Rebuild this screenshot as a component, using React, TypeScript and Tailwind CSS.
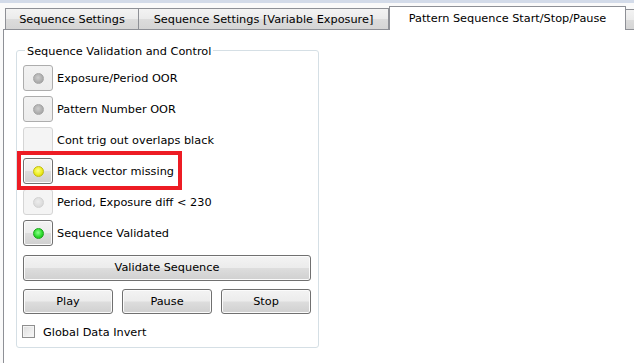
import React from "react";

const font = { fontFamily: '"DejaVu Sans", Verdana, sans-serif' };

function Led({ color }: { color: "gray" | "yellow" | "green" | "light" | "none" }) {
  if (color === "none") return null;
  const cls =
    color === "gray"
      ? "bg-[radial-gradient(circle_at_45%_40%,#cdcdcd_0%,#b0b0b0_55%,#999999_100%)] border border-[#a5a5a5]"
      : color === "yellow"
      ? "bg-[radial-gradient(circle_at_45%_40%,#fbff8a_0%,#eeee22_55%,#c9c400_100%)] border border-[#c2bc10]"
      : color === "green"
      ? "bg-[radial-gradient(circle_at_45%_40%,#8dff8d_0%,#2edc2e_55%,#14ad14_100%)] border border-[#1aa51a]"
      : "bg-[radial-gradient(circle_at_45%_40%,#ececec_0%,#dddddd_60%,#cfcfcf_100%)] border border-[#d2d2d2]";
  return <div className={`w-[11px] h-[11px] rounded-full ${cls}`} />;
}

type Kind = "dim" | "enabled" | "flat";

function LedButton({ kind, led }: { kind: Kind; led: "gray" | "yellow" | "green" | "light" | "none" }) {
  const cls =
    kind === "enabled"
      ? "border-[#707070] bg-[linear-gradient(to_bottom,#f3f3f3_0%,#ececec_48%,#dddddd_52%,#d0d0d0_100%)] shadow-[inset_0_0_0_1px_#fbfbfb]"
      : kind === "dim"
      ? "border-[#adadad] bg-[linear-gradient(to_bottom,#f2f2f2_0%,#ececec_100%)]"
      : "border-[#d5d5d5] bg-[#f4f4f4]";
  return (
    <div className={`w-[30px] h-[26px] shrink-0 rounded-[3px] border flex items-center justify-center ${cls}`}>
      <Led color={led} />
    </div>
  );
}

function Row({ kind, led, label }: { kind: Kind; led: "gray" | "yellow" | "green" | "light" | "none"; label: string }) {
  return (
    <div className="flex items-center gap-[4px] h-[26px]">
      <LedButton kind={kind} led={led} />
      <span className="pt-[2px] text-[11.3px] leading-none text-black">{label}</span>
    </div>
  );
}

function PushButton({ label, h }: { label: string; h: string }) {
  return (
    <div
      className={`${h} rounded-[3px] border border-[#707070] bg-[linear-gradient(to_bottom,#f3f3f3_0%,#ececec_48%,#dddddd_52%,#d0d0d0_100%)] shadow-[inset_0_0_0_1px_#fbfbfb] flex items-center justify-center text-[11.3px] leading-none text-black`}
    >
      {label}
    </div>
  );
}

export default function App() {
  return (
    <div className="relative w-[634px] h-[363px] overflow-hidden bg-[#fafafa] flex flex-col" style={font}>
      <div className="h-[3px] shrink-0 bg-[#d3dbe9]" />
      <div className="flex-1 flex flex-col pl-[3px]">
        {/* tabs */}
        <div className="h-[26px] shrink-0 flex items-end pl-[2px]">
          <div className="shrink-0 w-[133px] h-[21px] border-t border-l border-[#8e9096] bg-[linear-gradient(to_bottom,#f3f3f3_0%,#ebebeb_50%,#dcdcdc_51%,#d5d5d5_100%)] flex items-center justify-center pt-[2px] text-[11.3px] leading-none text-black">
            Sequence Settings
          </div>
          <div className="shrink-0 w-[251px] h-[21px] border-t border-l border-r border-[#8e9096] bg-[linear-gradient(to_bottom,#f3f3f3_0%,#ebebeb_50%,#dcdcdc_51%,#d5d5d5_100%)] flex items-center justify-center pt-[2px] text-[11.3px] leading-none text-black">
            Sequence Settings [Variable Exposure]
          </div>
          <div className="shrink-0 relative z-10 -mb-px w-[237px] h-[24px] border-t border-l border-r border-[#8e9096] bg-white flex items-center justify-center text-[11.3px] leading-none text-black">
            Pattern Sequence Start/Stop/Pause
          </div>
          <div className="shrink-0 w-[60px] h-[20px] border-t border-[#8e9096] bg-[linear-gradient(to_bottom,#f3f3f3_0%,#ebebeb_50%,#dcdcdc_51%,#d5d5d5_100%)]" />
        </div>
        {/* pane */}
        <div className="flex-1 border-t border-l border-[#8e9096] bg-white pl-[12px] pt-[20px]">
          <div className="relative w-[303px] rounded-[3px] border border-[#d5dfe5] pt-[14px] pl-[6px] pr-[7px] pb-[9px]">
            <span className="absolute left-[8px] -top-[6px] bg-white px-[2px] text-[11.3px] leading-[13px] text-black">
              Sequence Validation and Control
            </span>
            <div className="flex flex-col gap-[5px]">
              <Row kind="dim" led="gray" label="Exposure/Period OOR" />
              <Row kind="dim" led="gray" label="Pattern Number OOR" />
              <Row kind="flat" led="none" label="Cont trig out overlaps black" />
              <Row kind="enabled" led="yellow" label="Black vector missing" />
              <Row kind="flat" led="light" label="Period, Exposure diff < 230" />
              <Row kind="enabled" led="green" label="Sequence Validated" />
            </div>
            <div className="mt-[9px]">
              <PushButton label="Validate Sequence" h="h-[26px]" />
            </div>
            <div className="mt-[8px] grid grid-cols-3 gap-[9px]">
              <PushButton label="Play" h="h-[25px]" />
              <PushButton label="Pause" h="h-[25px]" />
              <PushButton label="Stop" h="h-[25px]" />
            </div>
            <div className="mt-[11px] flex items-center gap-[8px] h-[13px]">
              <div className="w-[13px] h-[13px] -ml-px border border-[#8f8f8f] bg-[linear-gradient(135deg,#dcdcdc_0%,#eeeeee_60%,#f8f8f8_100%)] shadow-[inset_0_0_0_1px_#f4f4f4]" />
              <span className="pt-[2px] text-[11.3px] leading-none text-black">Global Data Invert</span>
            </div>
          </div>
        </div>
      </div>
      {/* red highlight annotation */}
      <div className="absolute left-[17px] top-[151px] w-[165px] h-[39px] border-[4px] border-[#ed1c24]" />
    </div>
  );
}
